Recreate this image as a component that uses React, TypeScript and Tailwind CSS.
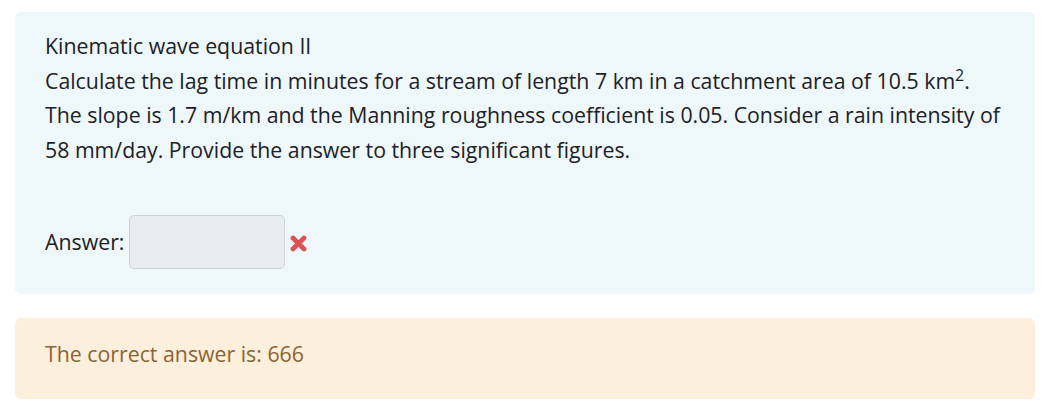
import React from "react";

export default function App() {
  return (
    <div
      className="w-[1053px] h-[420px] bg-white pt-[12px] pl-[15px] pr-[18px] text-[#1d2125]"
      style={{ fontFamily: '"Open Sans", "Noto Sans", sans-serif' }}
    >
      <div className="bg-[#eef7fa] rounded-[6px] pl-[30px] pr-[16px] pt-[17px] pb-[24px] h-[282px]">
        <div className="text-[21.3px] leading-[34.5px]">
          <p>Kinematic wave equation II</p>
          <p>
            Calculate the lag time in minutes for a stream of length 7 km in a catchment area of 10.5 km
            <sup>2</sup>.<br />
            The slope is 1.7 m/km and the Manning roughness coefficient is 0.05. Consider a rain intensity of
            <br />
            58 mm/day. Provide the answer to three significant figures.
          </p>
        </div>
        <div className="flex items-center mt-[48px]">
          <span className="text-[21.3px] mr-[5px]">Answer:</span>
          <div className="w-[156px] h-[54px] bg-[#e9ecef] border border-[#ced4da] rounded-[5px]" />
          <svg className="ml-[5px] mt-[2px]" width="17" height="17" viewBox="0 0 16 16">
            <path d="M2.8 2.8 L13.2 13.2 M13.2 2.8 L2.8 13.2" stroke="#dc5252" strokeWidth="4.4" strokeLinecap="round" />
          </svg>
        </div>
      </div>
      <div className="mt-[24px] bg-[#fcefdc] rounded-[6px] h-[81px] pl-[30px] pb-[10px] flex items-center text-[21.3px] text-[#8b6432]">
        The correct answer is: 666
      </div>
    </div>
  );
}
